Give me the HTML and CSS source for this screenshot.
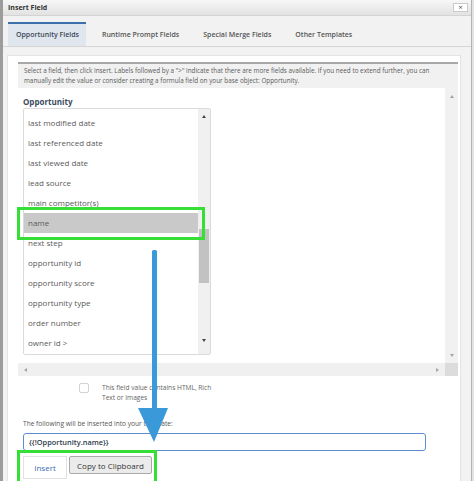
FILE: index.html
```html
<!DOCTYPE html>
<html>
<head>
<meta charset="utf-8">
<link rel="stylesheet" href="styles.css">
</head>
<body>
<div class="screen">
  <div class="edge-left"></div>
  <div class="dialog">
    <div class="titlebar"><span class="title">Insert Field</span><span class="close">×</span></div>
    <div class="tabs">
      <div class="tab active">Opportunity Fields</div>
      <div class="tab">Runtime Prompt Fields</div>
      <div class="tab">Special Merge Fields</div>
      <div class="tab">Other Templates</div>
    </div>
    <div class="panel">
      <div class="frame">
        <div class="info">Select a field, then click Insert. Labels followed by a "&gt;" indicate that there are more fields available. If you need to extend further, you can<br>manually edit the value or consider creating a formula field on your base object: Opportunity.</div>
        <div class="scroller">
          <div class="scroll-main">
            <div class="obj-label">Opportunity</div>
            <div class="listbox">
              <div class="items">
                <div class="item">last modified date</div>
                <div class="item">last referenced date</div>
                <div class="item">last viewed date</div>
                <div class="item">lead source</div>
                <div class="item">main competitor(s)</div>
                <div class="item sel">name</div>
                <div class="item">next step</div>
                <div class="item">opportunity id</div>
                <div class="item">opportunity score</div>
                <div class="item">opportunity type</div>
                <div class="item">order number</div>
                <div class="item">owner id &gt;</div>
              </div>
              <div class="lbar">
                <span class="tri up dark"></span>
                <span class="thumb"></span>
                <span class="tri down dark"></span>
              </div>
            </div>
          </div>
          <div class="vbar">
            <span class="tri up"></span>
            <span class="tri down"></span>
          </div>
        </div>
        <div class="hbar">
          <div class="htrack"><span class="tri left"></span><span class="tri right"></span></div>
          <div class="corner"></div>
        </div>
      </div>
      <div class="check-row">
        <span class="checkbox"></span>
        <span class="check-text">This field value contains HTML, Rich<br>Text or Images</span>
      </div>
      <div class="tpl-label">The following will be inserted into your template:</div>
      <div class="tpl-input">{{!Opportunity.name}}</div>
      <div class="actions">
        <button class="btn insert">Insert</button>
        <button class="btn copy">Copy to Clipboard</button>
      </div>
    </div>
  </div>
  <div class="edge-right"></div>
  <svg class="arrow" width="474" height="481" viewBox="0 0 474 481">
    <rect x="152" y="250" width="5" height="162" rx="1.5" fill="#3a9ad9"/>
    <polygon points="138,408 168,408 154,442" fill="#3a9ad9"/>
  </svg>
</div>
</body>
</html>
```
FILE: styles.css
```css
body {
  margin: 0;
  width: 474px;
  height: 481px;
  overflow: hidden;
  background: #dcdcdc;
  font-family: "Open Sans", "Liberation Sans", sans-serif;
}
.screen {
  position: relative;
  display: flex;
  height: 481px;
}
.edge-left {
  width: 3px;
  background: #9c9c9c;
}
.dialog {
  width: 468px;
  background: #f2f2f2;
  display: flex;
  flex-direction: column;
}
.edge-right {
  width: 3px;
  box-sizing: border-box;
  border-left: 1px solid #b3b3b3;
  background: #e2e2e2;
}
.titlebar {
  height: 16px;
  box-sizing: border-box;
  display: flex;
  align-items: center;
  justify-content: space-between;
  padding: 0 3px 0 5px;
  background: linear-gradient(#f7f7f7, #e2e2e2);
  border-bottom: 1px solid #d4d4d4;
}
.title {
  font-size: 7px;
  font-weight: 700;
  color: #333;
}
.close {
  width: 15px;
  height: 9px;
  box-sizing: border-box;
  background: #fff;
  border: 1px solid #c9c9c9;
  font-size: 8px;
  line-height: 6px;
  text-align: center;
  color: #555;
}
.tabs {
  display: flex;
  gap: 8px;
  padding: 6px 0 0 5px;
  border-bottom: 1px solid #d6d6d6;
}
.tab {
  height: 24px;
  box-sizing: border-box;
  padding: 2px 8px 0;
  font-size: 7px;
  font-weight: 600;
  line-height: 22px;
  color: #555;
}
.tab.active {
  background: #dfe6ee;
  border-top: 2px solid #3d6fa9;
  padding: 0 7px 0 8px;
  color: #3a4656;
}
.panel {
  margin: 9px 11px 0 5px;
  flex: 1;
  background: #fff;
  box-shadow: 0 0 0 1px #e4e4e4;
  padding: 6px 2px 0 10px;
}
.frame {
  width: 440px;
  border-top: 2px solid #a8a8a8;
  background: #f1f1f1;
}
.info {
  height: 24px;
  box-sizing: border-box;
  padding: 2px 6px;
  font-size: 6.35px;
  line-height: 10px;
  color: #5a5a5a;
  white-space: nowrap;
}
.scroller {
  display: flex;
  height: 275px;
}
.scroll-main {
  flex: 1;
  background: #fff;
  padding: 9px 0 0 5px;
}
.obj-label {
  height: 10px;
  margin-bottom: 1px;
  font-size: 8px;
  font-weight: 700;
  line-height: 10px;
  color: #3b4b60;
}
.listbox {
  width: 188px;
  height: 247px;
  box-sizing: border-box;
  border: 1px solid #dadada;
  border-radius: 2px;
  display: flex;
}
.items {
  flex: 1;
  padding-top: 4px;
}
.item {
  height: 20px;
  padding-left: 4px;
  font-size: 8px;
  line-height: 20px;
  color: #5a5a5a;
}
.item.sel {
  position: relative;
  background: #c9c9c9;
}
.item.sel::after {
  content: "";
  position: absolute;
  left: -7px;
  right: -7px;
  top: -6px;
  bottom: -7px;
  border: 3px solid #36df36;
}
.lbar {
  width: 12px;
  background: #f0f0f0;
  display: flex;
  flex-direction: column;
  align-items: center;
}
.tri {
  width: 0;
  height: 0;
  border-left: 2.5px solid transparent;
  border-right: 2.5px solid transparent;
}
.tri.up {
  border-bottom: 3px solid #a5a5a5;
  margin-top: 6px;
}
.tri.down {
  border-top: 3px solid #a5a5a5;
  margin-top: auto;
}
.tri.dark.up { border-bottom-color: #444; }
.tri.dark.down { border-top-color: #444; margin-bottom: 12px; }
.thumb {
  width: 10px;
  height: 54px;
  margin-top: 111px;
  background: #c2c2c2;
}
.vbar {
  width: 13px;
  background: #f1f1f1;
  display: flex;
  flex-direction: column;
  align-items: center;
}
.vbar .tri.up { margin-top: 7px; }
.vbar .tri.down { margin-bottom: 6px; }
.hbar {
  display: flex;
  height: 13px;
}
.htrack {
  flex: 1;
  background: #f0f0f0;
  display: flex;
  align-items: center;
  justify-content: space-between;
  padding: 0 6px;
}
.tri.left, .tri.right {
  border: none;
  border-top: 2.5px solid transparent;
  border-bottom: 2.5px solid transparent;
}
.tri.left { border-right: 3px solid #a5a5a5; }
.tri.right { border-left: 3px solid #a5a5a5; }
.corner {
  width: 13px;
  background: #dcdcdc;
}
.check-row {
  margin-top: 7px;
  padding-left: 61px;
  display: flex;
  gap: 13px;
}
.checkbox {
  width: 10px;
  height: 10px;
  box-sizing: border-box;
  border: 1px solid #d2d2d2;
  border-radius: 2px;
  background: #fff;
}
.check-text {
  font-size: 6.6px;
  line-height: 10px;
  color: #666;
  white-space: nowrap;
}
.tpl-label {
  margin-top: 16px;
  padding-left: 5px;
  font-size: 6.6px;
  line-height: 10px;
  color: #555;
}
.tpl-input {
  margin: 4px 0 0 5px;
  width: 403px;
  height: 18px;
  box-sizing: border-box;
  border: 1px solid #5d8fcf;
  border-radius: 3px;
  padding-left: 5px;
  font-size: 7.4px;
  font-weight: 600;
  line-height: 16px;
  color: #2d3a4b;
}
.actions {
  position: relative;
  display: flex;
  align-items: flex-start;
  gap: 2px;
  width: fit-content;
  margin: 5px 0 0 5px;
}
.actions::after {
  content: "";
  position: absolute;
  left: -6px;
  right: -5px;
  top: -6px;
  bottom: -8px;
  border: 3px solid #36df36;
  pointer-events: none;
}
.btn {
  font-family: inherit;
  font-size: 8px;
  margin: 0;
  padding: 0;
  box-sizing: border-box;
}
.btn.insert {
  width: 44px;
  height: 23px;
  background: #fff;
  border: 1px solid #e2e2e2;
  color: #3a6db3;
}
.btn.copy {
  width: 83px;
  height: 18px;
  background: #ebebeb;
  border: 1px solid #a9a9a9;
  border-radius: 2px;
  color: #333;
}
.arrow {
  position: absolute;
  left: 0;
  top: 0;
  pointer-events: none;
}
```
